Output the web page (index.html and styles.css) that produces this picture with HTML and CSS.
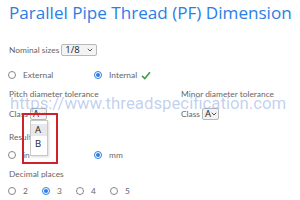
FILE: index.html
```html
<!DOCTYPE html>
<html>
<head>
<meta charset="utf-8">
<link rel="stylesheet" href="styles.css">
</head>
<body>
<div class="page">
  <h1 class="title">Parallel Pipe Thread (PF) Dimension</h1>

  <div class="row r-nominal">
    <span class="lbl">Nominal sizes</span>
    <span class="sel sel-wide"><span class="val">1/8</span><svg class="chev" viewBox="0 0 6 4" width="6" height="4"><path d="M0.8 0.8 L3 3 L5.2 0.8" fill="none" stroke="#555" stroke-width="1"/></svg></span>
  </div>

  <div class="row r-type">
    <span class="opt c1"><span class="radio"></span><span class="lbl">External</span></span>
    <span class="opt c2"><span class="radio on"></span><span class="lbl">Internal</span>
      <svg class="check" viewBox="0 0 10 9" width="10" height="9"><path d="M1 4.8 L3.8 7.5 L9 1.2" fill="none" stroke="#3aa047" stroke-width="1.6"/></svg>
    </span>
  </div>

  <div class="row r-tol">
    <span class="lbl col-a">Pitch diameter tolerance</span>
    <span class="lbl">Minor diameter tolerance</span>
  </div>

  <div class="row r-class">
    <span class="col-a classbox">
      <span class="lbl">Class</span>
      <span class="sel"><span class="val">A</span><svg class="chev" viewBox="0 0 6 4" width="6" height="4"><path d="M0.8 0.8 L3 3 L5.2 0.8" fill="none" stroke="#555" stroke-width="1"/></svg></span>
    </span>
    <span class="classbox">
      <span class="lbl">Class</span>
      <span class="sel"><span class="val">A</span><svg class="chev" viewBox="0 0 6 4" width="6" height="4"><path d="M0.8 0.8 L3 3 L5.2 0.8" fill="none" stroke="#555" stroke-width="1"/></svg></span>
    </span>
  </div>

  <div class="row r-result">
    <span class="lbl">Result</span>
  </div>

  <div class="row r-unit">
    <span class="opt c1"><span class="radio"></span><span class="lbl">in</span></span>
    <span class="opt c2"><span class="radio on"></span><span class="lbl">mm</span></span>
  </div>

  <div class="row r-dec">
    <span class="lbl">Decimal places</span>
  </div>

  <div class="row r-places">
    <span class="opt d"><span class="radio"></span><span class="lbl">2</span></span>
    <span class="opt d"><span class="radio on"></span><span class="lbl">3</span></span>
    <span class="opt d"><span class="radio"></span><span class="lbl">4</span></span>
    <span class="opt d"><span class="radio"></span><span class="lbl">5</span></span>
  </div>

  <div class="watermark">https://www.threadspecification.com</div>

  <div class="dropdown">
    <div class="item hi">A</div>
    <div class="item">B</div>
  </div>
  <div class="redbox"></div>
</div>
</body>
</html>
```

FILE: styles.css
```css
html, body {
  margin: 0;
  padding: 0;
  background: #ffffff;
}
.page {
  position: relative;
  width: 300px;
  height: 200px;
  overflow: hidden;
  padding-left: 9px;
  box-sizing: border-box;
  font-family: "Lato", "Open Sans", sans-serif;
  color: #666;
}
.title {
  margin: 0;
  height: 26px;
  line-height: 26px;
  font-family: "Open Sans", "Noto Sans", sans-serif;
  font-size: 17.1px;
  font-weight: 400;
  color: #2a7ee6;
  white-space: nowrap;
}
.row {
  display: flex;
  align-items: center;
  height: 12px;
  font-size: 8.4px;
  white-space: nowrap;
}
.lbl {
  line-height: 12px;
}
.r-nominal { margin-top: 18px; }
.r-type { margin-top: 13px; }
.r-tol { margin-top: 7px; }
.r-class { margin-top: 8px; }
.r-result { margin-top: 11px; }
.r-unit { margin-top: 6px; }
.r-dec { margin-top: 7px; }
.r-places { margin-top: 5px; }

.sel {
  display: inline-flex;
  align-items: center;
  justify-content: space-between;
  height: 12px;
  box-sizing: border-box;
  border: 1px solid #b8b8b8;
  border-radius: 2px;
  background: #f3f3f3;
  margin-left: 2px;
  padding: 0 2px 0 2px;
  width: 17px;
  color: #222;
  font-family: "Open Sans", sans-serif;
  font-size: 9.5px;
  line-height: 10px;
}
.sel-wide {
  width: 36px;
  padding: 0 3px;
}
.chev {
  display: block;
  flex: none;
}
.opt {
  display: inline-flex;
  align-items: center;
}
.c1 { width: 86px; }
.radio {
  width: 8px;
  height: 8px;
  box-sizing: border-box;
  border: 1px solid #888;
  border-radius: 50%;
  margin-left: -1px;
  margin-right: 7px;
  position: relative;
}
.radio.on {
  border-color: #2a7ee6;
}
.radio.on::after {
  content: "";
  position: absolute;
  left: 1px;
  top: 1px;
  width: 4px;
  height: 4px;
  border-radius: 50%;
  background: #2a7ee6;
}
.check {
  margin-left: 4px;
}
.col-a { width: 172px; }
.classbox {
  display: inline-flex;
  align-items: center;
}
.d { width: 34px; }

.watermark {
  position: absolute;
  left: 10px;
  top: 93px;
  font-family: "Roboto", sans-serif;
  font-size: 16.8px;
  color: rgba(120, 150, 220, 0.45);
  white-space: nowrap;
}
.dropdown {
  position: absolute;
  left: 30px;
  top: 120px;
  width: 18px;
  height: 36px;
  box-sizing: border-box;
  border: 1px solid #c8c8c8;
  background: #fff;
  box-shadow: 1px 1px 2px rgba(0,0,0,0.15);
  font-family: "Open Sans", sans-serif;
  font-size: 9.5px;
  color: #222;
}
.item {
  height: 12px;
  line-height: 12px;
  padding-left: 4px;
  margin-top: 2px;
}
.item.hi {
  background: #e8e8e8;
  margin-top: 3px;
}
.redbox {
  position: absolute;
  left: 22px;
  top: 113px;
  width: 36px;
  height: 51px;
  box-sizing: border-box;
  border: 2px solid #d0202a;
}
```
